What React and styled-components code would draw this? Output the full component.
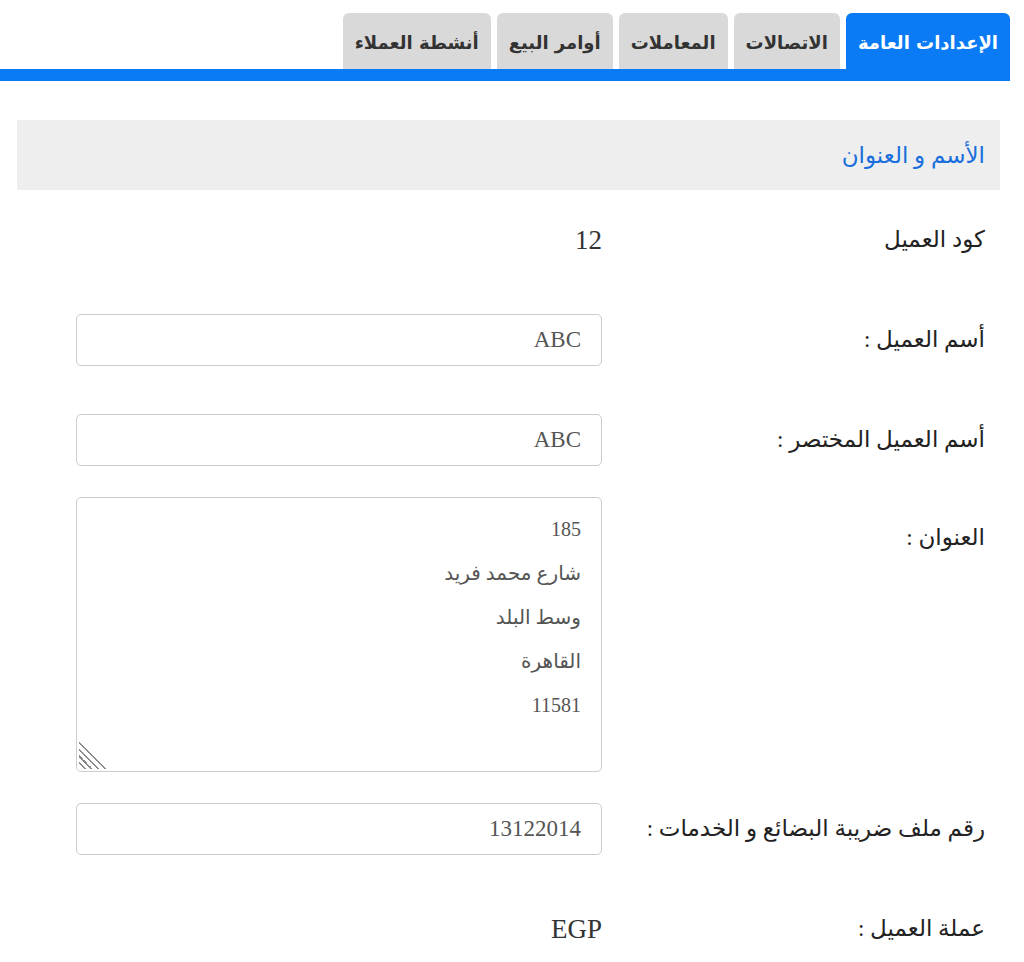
import React from 'react'
import styled, { createGlobalStyle } from 'styled-components'

const GlobalStyle = createGlobalStyle`
  html, body {
    margin: 0;
    padding: 0;
    background: #ffffff;
  }
  body {
    direction: rtl;
    font-family: "Liberation Serif", "DejaVu Sans", serif;
    color: #222222;
  }
`

const tabs = ['الإعدادات العامة', 'الاتصالات', 'المعاملات', 'أوامر البيع', 'أنشطة العملاء']

const App = () => {
  return (
    <Page>
      <GlobalStyle />
      <TabBar>
        {tabs.map((t, i) => (
          <Tab key={t} $active={i === 0}>{t}</Tab>
        ))}
      </TabBar>
      <TabLine />

      <Section>
        <SectionHeader>الأسم و العنوان</SectionHeader>

        <Row>
          <Label>كود العميل</Label>
          <Value>12</Value>
        </Row>

        <Row>
          <Label>أسم العميل :</Label>
          <Input defaultValue="ABC" />
        </Row>

        <Row>
          <Label>أسم العميل المختصر :</Label>
          <Input defaultValue="ABC" />
        </Row>

        <Row $tight>
          <Label $top>العنوان :</Label>
          <TextArea defaultValue={'185\nشارع محمد فريد\nوسط البلد\nالقاهرة\n11581'} />
        </Row>

        <Row>
          <Label>رقم ملف ضريبة البضائع و الخدمات :</Label>
          <Input defaultValue="13122014" />
        </Row>

        <Row>
          <Label>عملة العميل :</Label>
          <Value>EGP</Value>
        </Row>
      </Section>
    </Page>
  )
}

const Page = styled.div`
  width: 1024px;
  padding-top: 13px;
`

const TabBar = styled.nav`
  display: flex;
  align-items: flex-end;
  gap: 6px;
  padding-right: 14px;
  height: 56px;
`

const Tab = styled.div`
  display: flex;
  align-items: center;
  justify-content: center;
  height: 56px;
  padding: 2px 12px 0;
  box-sizing: border-box;
  border-radius: 6px 6px 0 0;
  background: ${p => (p.$active ? '#0a7af5' : '#d9d9d9')};
  color: ${p => (p.$active ? '#ffffff' : '#333333')};
  font-family: "DejaVu Sans", "Noto Sans", sans-serif;
  font-weight: bold;
  font-size: 18px;
  white-space: nowrap;
  cursor: pointer;
`

const TabLine = styled.div`
  height: 12px;
  margin-right: 14px;
  background: #0a7af5;
`

const Section = styled.section`
  margin: 39px 24px 0 17px;
`

const SectionHeader = styled.h3`
  margin: 0;
  height: 70px;
  display: flex;
  align-items: center;
  padding: 0 15px;
  background: #eeeeee;
  color: #1a6fdc;
  font-weight: normal;
  font-size: 23px;
`

const Row = styled.div`
  display: grid;
  grid-template-columns: 365px 526px;
  column-gap: 18px;
  align-items: start;
  padding: ${p => (p.$tight ? '7px' : '24px')} 15px ${p => (p.$tight ? '7px' : '24px')} 0;
`

const Label = styled.label`
  line-height: 52px;
  padding-top: ${p => (p.$top ? '15px' : '0')};
  font-size: 23px;
  color: #222222;
  white-space: nowrap;
`

const Value = styled.div`
  line-height: 52px;
  font-size: 27px;
  color: #333333;
`

const fieldBase = `
  box-sizing: border-box;
  width: 526px;
  border: 1px solid #cccccc;
  border-radius: 5px;
  background-color: #ffffff;
  color: #555555;
  font-family: "Liberation Serif", "DejaVu Sans", serif;
  font-size: 23px;
  direction: rtl;
  outline: none;
`

const Input = styled.input`
  ${fieldBase}
  height: 52px;
  padding: 0 20px;
`

const TextArea = styled.textarea`
  ${fieldBase}
  height: 275px;
  padding: 9px 20px;
  line-height: 44px;
  font-size: 20px;
  resize: none;
  background-image: linear-gradient(
    45deg,
    transparent 0 9%,
    #8a8a8a 9% 13%,
    transparent 13% 21%,
    #8a8a8a 21% 25%,
    transparent 25% 33%,
    #8a8a8a 33% 37%,
    transparent 37% 45%,
    #8a8a8a 45% 49%,
    transparent 49%
  );
  background-repeat: no-repeat;
  background-position: left 2px bottom 2px;
  background-size: 28px 28px;
`

export default App
